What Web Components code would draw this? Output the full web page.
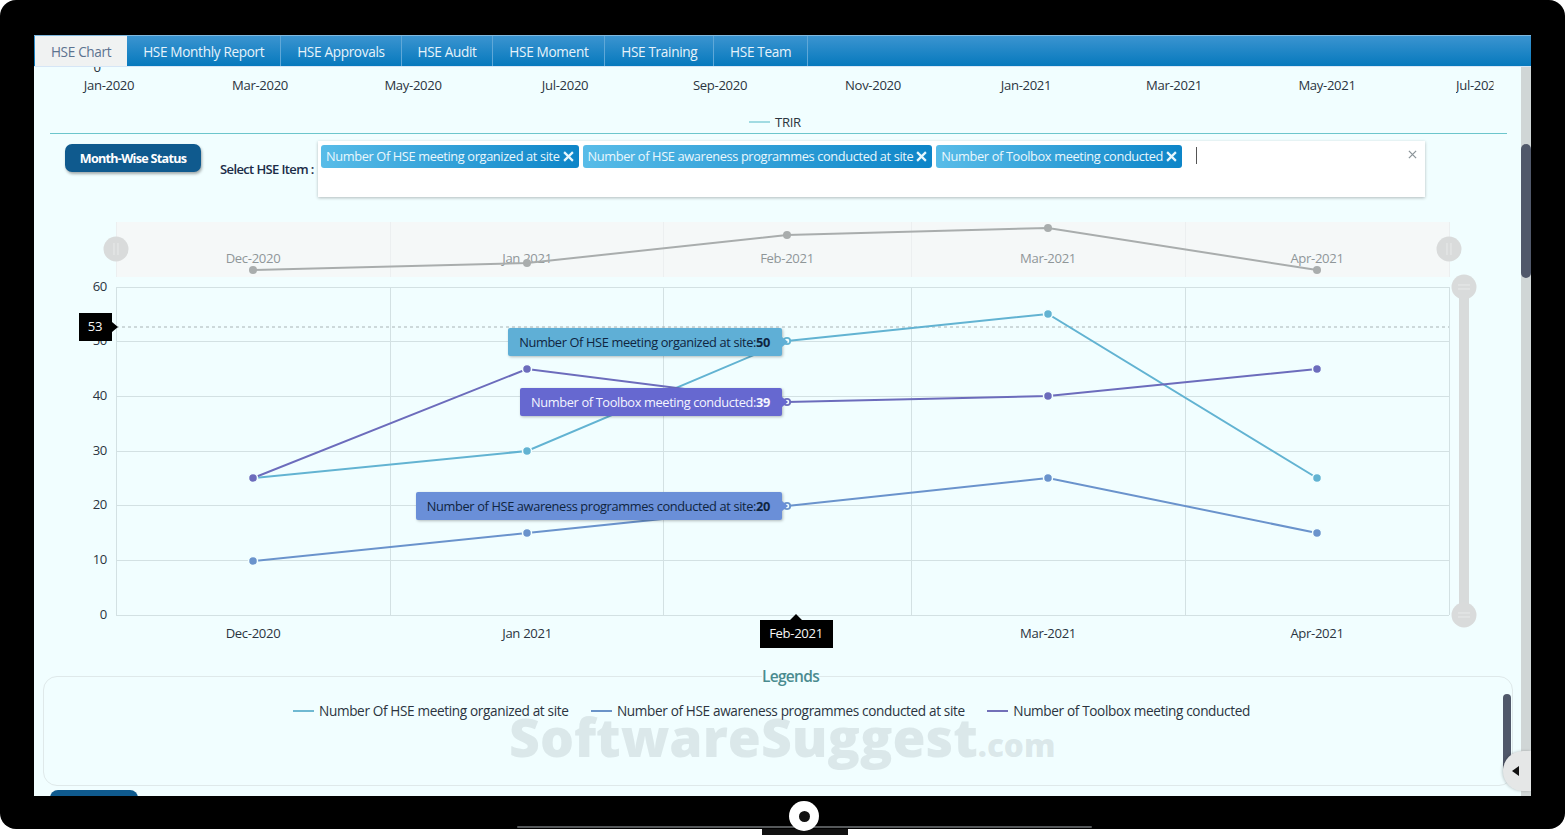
<!DOCTYPE html>
<html>
<head>
<meta charset="utf-8">
<title>HSE Chart</title>
<style>
  html, body { margin: 0; background: #fff; }
  body { font-family: "Open Sans", "Noto Sans", sans-serif; font-size: 13.6px; letter-spacing: -0.36px; }
</style>
</head>
<body>
<hse-monitor>
  <hse-tabs>
    <hse-tab active>HSE Chart</hse-tab>
    <hse-tab>HSE Monthly Report</hse-tab>
    <hse-tab>HSE Approvals</hse-tab>
    <hse-tab>HSE Audit</hse-tab>
    <hse-tab>HSE Moment</hse-tab>
    <hse-tab>HSE Training</hse-tab>
    <hse-tab>HSE Team</hse-tab>
  </hse-tabs>
  <trend-strip></trend-strip>
  <status-toolbar>
    <item-chip>Number Of HSE meeting organized at site</item-chip>
    <item-chip>Number of HSE awareness programmes conducted at site</item-chip>
    <item-chip>Number of Toolbox meeting conducted</item-chip>
  </status-toolbar>
  <month-chart>
    <chart-tip top="128" color="#5fafd6" value="50">Number Of HSE meeting organized at site:</chart-tip>
    <chart-tip top="188" color="#6668d0" value="39" light>Number of Toolbox meeting conducted:</chart-tip>
    <chart-tip top="292" color="#6a8fd8" value="20">Number of HSE awareness programmes conducted at site:</chart-tip>
  </month-chart>
  <legend-box>
    <legend-item color="#6fb9d2">Number Of HSE meeting organized at site</legend-item>
    <legend-item color="#6a93c8">Number of HSE awareness programmes conducted at site</legend-item>
    <legend-item color="#7270b8">Number of Toolbox meeting conducted</legend-item>
  </legend-box>
</hse-monitor>

<script>
class HseMonitor extends HTMLElement {
  constructor() {
    super();
    this.attachShadow({ mode: "open" });
  }

  static get styles() {
    return /* css */`
      :host {
        display: block;
        position: relative;
        width: 1565px;
        height: 835px;
        overflow: hidden;
      }

      .frame {
        box-sizing: border-box;
        height: 829px;
        padding: 35px 34px 0;
        background: #000;
        border-radius: 16px;
      }

      .screen {
        position: relative;
        height: 761px;
        overflow: hidden;
        background: #f1feff;
        display: flex;
        flex-direction: column;
      }

      .body {
        flex: 1;
        min-height: 0;
        display: flex;
      }

      .main {
        flex: 1;
        min-width: 0;
        overflow: hidden;
      }

      .scroll {
        flex: none;
        width: 10px;
        background: #d0d6d6;
        padding-top: 77px;
      }

      .scroll i {
        display: block;
        height: 134px;
        background: #50586a;
        border-radius: 5px;
      }

      .next-btn {
        width: 88px;
        height: 30px;
        margin: 4px 0 0 16px;
        background: #0f5a8e;
        border-radius: 8px;
      }

      .toggle {
        position: absolute;
        right: 0;
        bottom: 5px;
        width: 28px;
        height: 40px;
        border-radius: 20px 0 0 20px;
        background: #e5e7e7;
        box-shadow: -1px 0 3px #0003;
        display: flex;
        align-items: center;
        justify-content: center;
      }

      .toggle::before {
        content: "";
        border: 5px solid transparent;
        border-left-width: 0;
        border-right: 7px solid #111;
        margin-left: -4px;
      }

      .mark {
        position: absolute;
        left: 475px;
        top: 679px;
        font-family: "Open Sans", sans-serif;
        font-weight: 800;
        font-size: 53.5px;
        line-height: 46px;
        letter-spacing: 0;
        color: #9aa6ab40;
        white-space: nowrap;
      }

      .mark small { font-size: 31.5px; }

      .stand {
        position: absolute;
        left: 517px;
        top: 826px;
        width: 575px;
        height: 2px;
        background: #55585a;
        border-radius: 2px;
      }

      .foot {
        position: absolute;
        left: 762px;
        top: 829px;
        width: 86px;
        height: 6px;
        background: #111;
      }

      .cam {
        position: absolute;
        left: 789px;
        top: 801px;
        width: 30px;
        height: 30px;
        border-radius: 50%;
        background: #fff;
        display: flex;
        align-items: center;
        justify-content: center;
      }

      .cam::before {
        content: "";
        width: 11px;
        height: 11px;
        border-radius: 50%;
        background: #111;
      }
    `;
  }

  connectedCallback() {
    this.shadowRoot.innerHTML = /* html */`
    <style>${HseMonitor.styles}</style>
    <div class="frame">
      <div class="screen">
        <slot name="top"></slot>
        <div class="body">
          <div class="main">
            <slot></slot>
            <div class="next-btn"></div>
          </div>
          <div class="scroll"><i></i></div>
        </div>
        <div class="toggle"></div>
        <div class="mark">SoftwareSuggest<small>.com</small></div>
      </div>
    </div>
    <div class="stand"></div>
    <div class="foot"></div>
    <div class="cam"></div>`;
    this.querySelector("hse-tabs").slot = "top";
  }
}

class HseTabs extends HTMLElement {
  constructor() {
    super();
    this.attachShadow({ mode: "open" });
    this.shadowRoot.innerHTML = /* html */`
    <style>
      :host {
        display: flex;
        flex: none;
        height: 32px;
        box-sizing: border-box;
        padding-left: 1px;
        background: linear-gradient(#3b94d0, #0679bd);
        border-top: 1px solid #7fb8de;
        border-bottom: 1px solid #d6e6f6;
      }
    </style>
    <slot></slot>`;
  }
}

class HseTab extends HTMLElement {
  constructor() {
    super();
    this.attachShadow({ mode: "open" });
    this.shadowRoot.innerHTML = /* html */`
    <style>
      :host {
        display: flex;
        align-items: center;
        padding: 0 15.9px;
        border-right: 1px solid #5fa8d8;
        color: #e6f3fb;
        letter-spacing: -0.33px;
        white-space: nowrap;
      }

      :host([active]) {
        background: #f0f2f2;
        color: #5c7390;
        border-right: 0;
      }
    </style>
    <slot></slot>`;
  }
}

class TrendStrip extends HTMLElement {
  constructor() {
    super();
    this.attachShadow({ mode: "open" });
  }

  connectedCallback() {
    const months = [
      ["Jan-2020", 109], ["Mar-2020", 260], ["May-2020", 413], ["Jul-2020", 565],
      ["Sep-2020", 720], ["Nov-2020", 873], ["Jan-2021", 1026], ["Mar-2021", 1174],
      ["May-2021", 1327]
    ];
    const labels = months
      .map(([name, x]) => `<text x="${x}" y="90" text-anchor="middle">${name}</text>`)
      .join("");

    this.shadowRoot.innerHTML = /* html */`
    <style>
      :host { display: block; }
      svg { display: block; }
      text { font-size: 13.1px; letter-spacing: -0.32px; fill: #2b3440; }
      .hr { height: 1px; margin: 0 14px 0 16px; background: #6cc6cc; }
    </style>
    <svg width="1487" height="66" viewBox="34 67 1487 66">
      <text x="97" y="72" text-anchor="middle">0</text>
      ${labels}
      <svg x="1456" y="67" width="37.5" height="40" viewBox="1456 67 37.5 40">
        <text x="1456" y="90">Jul-2021</text>
      </svg>
      <line x1="749" x2="770" y1="122" y2="122" stroke="#86cfd9" stroke-width="1.5"/>
      <text x="775" y="127">TRIR</text>
    </svg>
    <div class="hr"></div>`;
  }
}

class StatusToolbar extends HTMLElement {
  constructor() {
    super();
    this.attachShadow({ mode: "open" });
    this.shadowRoot.innerHTML = /* html */`
    <style>
      :host {
        display: flex;
        align-items: flex-start;
        height: 66px;
        box-sizing: border-box;
        padding: 7px 0 0 31px;
      }

      .btn {
        box-sizing: border-box;
        width: 136px;
        height: 28px;
        margin-top: 3px;
        background: #0f5a8e;
        border-radius: 7px;
        box-shadow: 1px 2px 3px #0005;
        color: #fff;
        font-weight: 700;
        font-size: 12.6px;
        letter-spacing: -0.72px;
        display: flex;
        align-items: center;
        justify-content: center;
      }

      .label {
        margin: 19px 0 0 19px;
        width: 98px;
        color: #1c2c48;
        font-size: 13px;
        font-weight: 600;
        letter-spacing: -0.62px;
        white-space: nowrap;
      }

      .input {
        position: relative;
        box-sizing: border-box;
        width: 1107px;
        height: 56px;
        padding: 4px 3px;
        background: #fff;
        box-shadow: 0 1px 3px #0004;
        display: flex;
        align-items: flex-start;
        gap: 4px;
      }

      .caret {
        width: 1px;
        height: 17px;
        margin: 2px 0 0 10px;
        background: #555;
      }

      .clear {
        position: absolute;
        right: 8px;
        top: 9px;
        width: 9px;
        height: 9px;
      }
    </style>
    <div class="btn">Month-Wise Status</div>
    <div class="label">Select HSE Item :</div>
    <div class="input">
      <slot></slot>
      <div class="caret"></div>
      <svg class="clear" viewBox="0 0 10 10"><path d="M1 1l8 8M9 1l-8 8" stroke="#8b9499" stroke-width="1.4"/></svg>
    </div>`;
  }
}

class ItemChip extends HTMLElement {
  constructor() {
    super();
    this.attachShadow({ mode: "open" });
    this.shadowRoot.innerHTML = /* html */`
    <style>
      :host {
        display: flex;
        align-items: center;
        gap: 3px;
        box-sizing: border-box;
        height: 23px;
        padding: 0 5px 2px;
        border-radius: 3px;
        background: linear-gradient(90deg, #58bce8, #0d85c8);
        color: #e9f7fd;
        font-size: 12.8px;
        letter-spacing: -0.37px;
        white-space: nowrap;
      }

      svg { width: 11px; height: 11px; margin-top: 2px; }
    </style>
    <slot></slot>
    <svg viewBox="0 0 10 10"><path d="M1 1l8 8M9 1l-8 8" stroke="#e9f7fd" stroke-width="2"/></svg>`;
  }
}

class MonthChart extends HTMLElement {
  constructor() {
    super();
    this.attachShadow({ mode: "open" });
  }

  static get styles() {
    return /* css */`
      :host {
        display: block;
        position: relative;
        height: 465px;
      }

      svg { display: block; }
      text { font-size: 13.1px; letter-spacing: -0.32px; fill: #2b3440; }
      .mini text { fill: #8f9698; }
      .white { fill: #f5f5f5; }
    `;
  }

  connectedCallback() {
    const xs = [253, 527, 787, 1048, 1317];
    const months = ["Dec-2020", "Jan 2021", "Feb-2021", "Mar-2021", "Apr-2021"];
    const series = [
      { color: "#62b3d2", ys: [478, 451, 341, 314, 478] },
      { color: "#6a93cc", ys: [561, 533, 506, 478, 533] },
      { color: "#6c6cbc", ys: [478, 369, 402, 396, 369] }
    ];
    const miniYs = [270, 263, 235, 228, 270];
    const gridX = [116, 390, 663, 911, 1185, 1449];
    const gridY = [287, 341, 396, 451, 505, 560, 615];
    const yNames = [60, 50, 40, 30, 20, 10, 0];
    const poly = (ys) => ys.map((y, i) => `${xs[i]},${y}`).join(" ");

    const handle = (cx, cy, vertical) => /* html */`
      <circle cx="${cx}" cy="${cy}" r="12.5" fill="#d9dbdb"/>
      ${vertical
        ? `<path d="M${cx - 6} ${cy - 2}h12M${cx - 6} ${cy + 2}h12" stroke="#e8eaea"/>`
        : `<path d="M${cx - 2} ${cy - 6}v12M${cx + 2} ${cy - 6}v12" stroke="#e8eaea"/>`}`;

    const vLines = gridX
      .map((x) => `<line x1="${x}.5" x2="${x}.5" y1="287" y2="615" stroke="#d3e1e3"/>`)
      .join("");
    const miniLines = gridX
      .map((x) => `<line x1="${x}.5" x2="${x}.5" y1="222" y2="277" stroke="#eceff0"/>`)
      .join("");
    const hLines = gridY
      .map((y) => `<line x1="116" x2="1449" y1="${y}.5" y2="${y}.5" stroke="#d3e1e3"/>`)
      .join("");
    const yLabels = gridY
      .map((y, i) => `<text x="107" y="${y + 4}" text-anchor="end">${yNames[i]}</text>`)
      .join("");
    const lines = series.map((s) => /* html */`
      <polyline points="${poly(s.ys)}" fill="none" stroke="${s.color}" stroke-width="2"/>
      ${s.ys.map((y, i) => i === 2
        ? `<circle cx="${xs[i]}" cy="${y}" r="3.2" fill="#f1feff" stroke="${s.color}" stroke-width="1.8"/>`
        : `<circle cx="${xs[i]}" cy="${y}" r="4.5" fill="${s.color}" stroke="#f1feff" stroke-width="1.5"/>`).join("")}
    `).join("");

    this.shadowRoot.innerHTML = /* html */`
    <style>${MonthChart.styles}</style>
    <svg width="1487" height="465" viewBox="34 200 1487 465">
      <g class="mini">
        <rect x="116" y="222" width="1333" height="55" fill="#f5f8f8"/>
        ${miniLines}
        ${months.map((m, i) => `<text x="${xs[i]}" y="263" text-anchor="middle">${m}</text>`).join("")}
        <polyline points="${poly(miniYs)}" fill="none" stroke="#a9adad" stroke-width="2"/>
        ${miniYs.map((y, i) => `<circle cx="${xs[i]}" cy="${y}" r="4" fill="#a9adad"/>`).join("")}
        ${handle(116, 249)}
        ${handle(1449, 249)}
      </g>
      ${hLines}
      ${vLines}
      ${yLabels}
      ${months.map((m, i) => i === 2 ? "" : `<text x="${xs[i]}" y="638" text-anchor="middle">${m}</text>`).join("")}
      <line x1="116" x2="1449" y1="327" y2="327" stroke="#a9b4b6" stroke-dasharray="3 3"/>
      ${lines}
      <rect x="1459" y="287" width="10" height="328" fill="#d8dbdb"/>
      ${handle(1464, 287, true)}
      ${handle(1464, 615, true)}
      <path d="M79 313h33v9l6 5-6 5v9h-33z" fill="#000"/>
      <text x="95" y="331" text-anchor="middle" class="white">53</text>
      <path d="M760 620h30l6-6 6 6h31v28h-73z" fill="#000"/>
      <text x="796" y="638" text-anchor="middle" class="white">Feb-2021</text>
    </svg>
    <slot></slot>`;
  }
}

class ChartTip extends HTMLElement {
  constructor() {
    super();
    this.attachShadow({ mode: "open" });
  }

  connectedCallback() {
    const color = this.getAttribute("color");
    const ink = this.hasAttribute("light") ? "#f4f5ff" : "#0f2540";
    this.shadowRoot.innerHTML = /* html */`
    <style>
      :host {
        position: absolute;
        right: 739px;
        top: ${this.getAttribute("top")}px;
        box-sizing: border-box;
        height: 28px;
        padding: 0 12px 0 11px;
        display: flex;
        align-items: center;
        background: ${color};
        color: ${ink};
        font-size: 12.8px;
        letter-spacing: -0.36px;
        border-radius: 2px;
        box-shadow: 1px 1px 3px #0004;
        white-space: nowrap;
      }

      :host::after {
        content: "";
        position: absolute;
        left: 100%;
        top: 9px;
        border: 5px solid transparent;
        border-left: 6px solid ${color};
        border-right: 0;
      }

      b { font-weight: 700; }
    </style>
    <slot></slot><b>${this.getAttribute("value")}</b>`;
  }
}

class LegendBox extends HTMLElement {
  constructor() {
    super();
    this.attachShadow({ mode: "open" });
    this.shadowRoot.innerHTML = /* html */`
    <style>
      :host { display: block; margin: 0 8px 0 9px; }

      fieldset {
        box-sizing: border-box;
        height: 121px;
        margin: 0;
        padding: 0;
        border: 1px solid #dfe9ea;
        border-radius: 14px;
        display: flex;
        min-width: 0;
      }

      legend {
        margin-left: 718px;
        padding: 0;
        color: #4a8b8f;
        font-size: 15.5px;
        font-weight: 600;
        letter-spacing: -0.7px;
        line-height: 22px;
      }

      .items {
        flex: 1;
        display: flex;
        justify-content: center;
        align-items: flex-start;
        gap: 22.5px;
        padding: 14px 4px 0 0;
      }

      .bar {
        flex: none;
        width: 8px;
        height: 76px;
        margin: 7px 1px 0 0;
        background: #50586a;
        border-radius: 4px;
      }
    </style>
    <fieldset>
      <legend>Legends</legend>
      <div class="items"><slot></slot></div>
      <div class="bar"></div>
    </fieldset>`;
  }
}

class LegendItem extends HTMLElement {
  constructor() {
    super();
    this.attachShadow({ mode: "open" });
  }

  connectedCallback() {
    this.shadowRoot.innerHTML = /* html */`
    <style>
      :host {
        display: flex;
        align-items: center;
        gap: 5px;
        color: #2b3440;
        white-space: nowrap;
      }

      i {
        display: block;
        width: 21px;
        height: 2px;
        background: ${this.getAttribute("color")};
      }
    </style>
    <i></i><slot></slot>`;
  }
}

customElements.define("hse-monitor", HseMonitor);
customElements.define("hse-tabs", HseTabs);
customElements.define("hse-tab", HseTab);
customElements.define("trend-strip", TrendStrip);
customElements.define("status-toolbar", StatusToolbar);
customElements.define("item-chip", ItemChip);
customElements.define("month-chart", MonthChart);
customElements.define("chart-tip", ChartTip);
customElements.define("legend-box", LegendBox);
customElements.define("legend-item", LegendItem);
</script>
</body>
</html>
